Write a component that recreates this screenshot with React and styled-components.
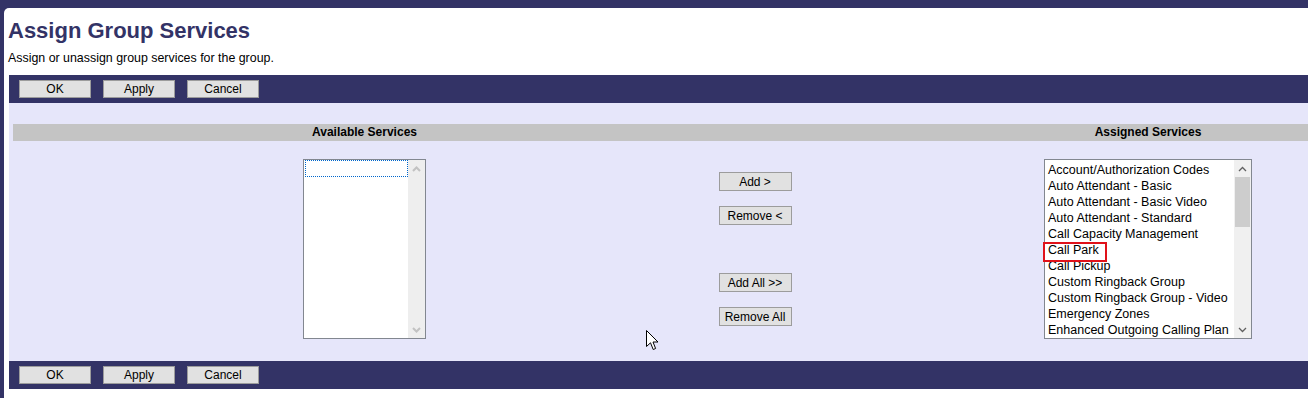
import React from 'react';
import styled, { createGlobalStyle } from 'styled-components';

const Global = createGlobalStyle`
  html, body {
    margin: 0;
    padding: 0;
    overflow: hidden;
    background: #fff;
  }
`;

const Frame = styled.div`
  width: 100vw;
  height: 398px;
  box-sizing: border-box;
  padding: 8px 0 0 4px;
  background: #333366;
  font-family: "Liberation Sans", Arial, sans-serif;
  overflow: hidden;
`;

const Sheet = styled.div`
  width: 1516px;
  height: 100%;
  background: #fff;
  border-top-left-radius: 5px;
`;

const Header = styled.div`
  padding: 10px 0 0 4px;
`;

const Title = styled.h1`
  margin: 0;
  font-size: 22px;
  line-height: 26px;
  font-weight: bold;
  color: #333366;
`;

const Subtitle = styled.p`
  margin: 7px 0 0;
  font-size: 12.4px;
  line-height: 14px;
  color: #000;
`;

const Content = styled.div`
  margin: 10px 0 0 5px;
`;

const Toolbar = styled.div`
  display: flex;
  gap: 12px;
  height: 28px;
  box-sizing: border-box;
  padding: 5px 0 5px 10px;
  background: #333366;
`;

const Button = styled.button`
  width: ${p => p.w || 72}px;
  height: ${p => p.h || 18}px;
  box-sizing: border-box;
  padding: 0;
  margin: 0;
  border: 1px solid #9c9c9c;
  border-radius: 0;
  background: #e1e1e1;
  font-family: "Liberation Sans", Arial, sans-serif;
  font-size: 12px;
  color: #000;
  white-space: nowrap;
  overflow: hidden;
`;

const Panel = styled.div`
  position: relative;
  background: #e6e6fa;
  padding: 21px 0 22px 4px;
`;

const Columns = styled.div`
  display: grid;
  grid-template-columns: 703px 78px 708px;
`;

const HeadBar = styled(Columns)`
  height: 17px;
  background: #c4c4c4;
  font-size: 12px;
  font-weight: bold;
  line-height: 17px;
  color: #000;
  text-align: center;
`;

const Body = styled(Columns)`
  padding-top: 18px;
`;

const Cell = styled.div`
  display: flex;
  justify-content: center;
`;

const Mover = styled.div`
  display: flex;
  flex-direction: column;
  align-items: center;
  padding-top: 13px;
`;

const Gap = styled.div`
  height: ${p => p.h}px;
`;

const ListBox = styled.div`
  position: relative;
  width: ${p => p.w}px;
  height: 180px;
  box-sizing: border-box;
  border: 1px solid #828790;
  background: #fff;
  display: flex;
`;

const Items = styled.div`
  flex: 1;
  overflow: hidden;
  padding: 2px 0 0 3px;
  font-size: 12.5px;
  line-height: 16px;
  color: #000;
`;

const Item = styled.div`
  white-space: nowrap;
`;

const FocusRow = styled.div`
  margin: -2px 0 0 -2px;
  height: 17px;
  box-sizing: border-box;
  border: 1px dotted #0066cc;
`;

const Scroll = styled.div`
  width: 17px;
  background: ${p => (p.disabled ? '#eeeeee' : '#f0f0f0')};
  display: flex;
  flex-direction: column;
  align-items: center;
`;

const Arrow = styled.div`
  height: 17px;
  width: 17px;
  display: flex;
  align-items: center;
  justify-content: center;
`;

const Track = styled.div`
  flex: 1;
  width: 100%;
  display: flex;
  justify-content: center;
`;

const Thumb = styled.div`
  width: 15px;
  height: 50px;
  background: #cdcdcd;
`;

const Marker = styled.div`
  position: absolute;
  left: -2px;
  top: 82px;
  width: 64px;
  height: 20px;
  box-sizing: border-box;
  border: 2px solid #e0121a;
`;

const Cursor = styled.svg`
  position: absolute;
  left: 637px;
  top: 227px;
`;

const Chevron = ({ up, color, bold }) => (
  <svg width="9" height="6" viewBox="0 0 9 6">
    <polyline
      points={up ? '1,5 4.5,1.5 8,5' : '1,1 4.5,4.5 8,1'}
      fill="none"
      stroke={color}
      strokeWidth={bold ? 2 : 1.3}
    />
  </svg>
);

const Scrollbar = ({ disabled }) => {
  const color = disabled ? '#c2c2c2' : '#606060';
  return (
    <Scroll disabled={disabled}>
      <Arrow><Chevron up color={color} bold={disabled} /></Arrow>
      <Track>{!disabled && <Thumb />}</Track>
      <Arrow><Chevron color={color} bold={disabled} /></Arrow>
    </Scroll>
  );
};

const assigned = [
  'Account/Authorization Codes',
  'Auto Attendant - Basic',
  'Auto Attendant - Basic Video',
  'Auto Attendant - Standard',
  'Call Capacity Management',
  'Call Park',
  'Call Pickup',
  'Custom Ringback Group',
  'Custom Ringback Group - Video',
  'Emergency Zones',
  'Enhanced Outgoing Calling Plan',
];

const Actions = () => (
  <Toolbar>
    <Button>OK</Button>
    <Button>Apply</Button>
    <Button>Cancel</Button>
  </Toolbar>
);

export default function App() {
  return (
    <>
      <Global />
      <Frame>
        <Sheet>
          <Header>
            <Title>Assign Group Services</Title>
            <Subtitle>Assign or unassign group services for the group.</Subtitle>
          </Header>
          <Content>
            <Actions />
            <Panel>
              <HeadBar>
                <div>Available Services</div>
                <div />
                <div>Assigned Services</div>
              </HeadBar>
              <Body>
                <Cell>
                  <ListBox w={123}>
                    <Items>
                      <FocusRow />
                    </Items>
                    <Scrollbar disabled />
                  </ListBox>
                </Cell>
                <Mover>
                  <Button w={73} h={19}>Add &gt;</Button>
                  <Gap h={15} />
                  <Button w={73} h={19}>Remove &lt;</Button>
                  <Gap h={48} />
                  <Button w={73} h={19}>Add All &gt;&gt;</Button>
                  <Gap h={15} />
                  <Button w={73} h={19}>Remove All</Button>
                </Mover>
                <Cell>
                  <ListBox w={208}>
                    <Items>
                      {assigned.map(s => <Item key={s}>{s}</Item>)}
                    </Items>
                    <Scrollbar />
                    <Marker />
                  </ListBox>
                </Cell>
              </Body>
              <Cursor width="13" height="21" viewBox="0 0 13 21">
                <path
                  d="M0.5 0.5 L0.5 16.5 L4.5 12.8 L7.2 19.5 L9.6 18.5 L7 12 L12 12 Z"
                  fill="#fff"
                  stroke="#000"
                  strokeWidth="1"
                />
              </Cursor>
            </Panel>
            <Actions />
          </Content>
        </Sheet>
      </Frame>
    </>
  );
}
